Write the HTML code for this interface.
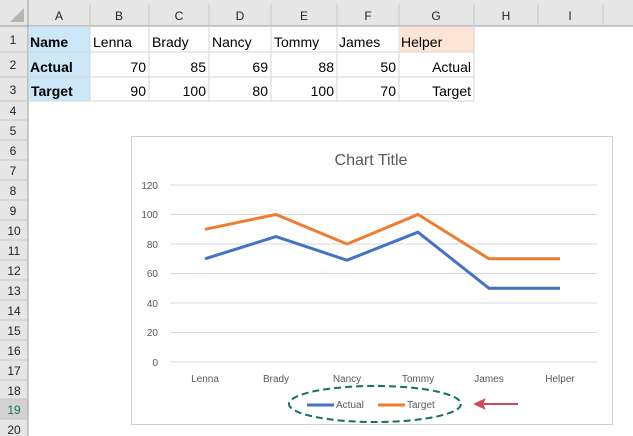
<!DOCTYPE html><html><head><style>
body{margin:0;width:633px;height:436px;overflow:hidden;background:#fff;font-family:"Liberation Sans",Arial,sans-serif;position:relative}
.a{position:absolute}
</style></head><body>
<svg class="a" style="left:0;top:0" width="633" height="436">
<rect x="0" y="0" width="633" height="26" fill="#e6e6e6"/>
<rect x="0" y="0" width="28" height="436" fill="#e6e6e6"/>
<rect x="0" y="399" width="28" height="20" fill="#d2d2d2"/>
<line x1="0" y1="26" x2="633" y2="26" stroke="#9b9b9b"/>
<line x1="28" y1="0" x2="28" y2="436" stroke="#9b9b9b"/>
<polygon points="24,8 24,22 10,22" fill="#b5b5b5"/>
<g stroke="#c8c8c8">
<line x1="90" y1="4" x2="90" y2="26"/><line x1="149" y1="4" x2="149" y2="26"/><line x1="209" y1="4" x2="209" y2="26"/><line x1="271" y1="4" x2="271" y2="26"/><line x1="337" y1="4" x2="337" y2="26"/><line x1="399" y1="4" x2="399" y2="26"/><line x1="474" y1="4" x2="474" y2="26"/><line x1="538" y1="4" x2="538" y2="26"/><line x1="603" y1="4" x2="603" y2="26"/>
</g>
<rect x="29" y="27" width="61" height="74" fill="#cce8f8"/>
<rect x="400" y="27" width="74" height="25" fill="#fce4d6"/>
<g stroke="#d4d4d4">
<line x1="28" y1="52" x2="474" y2="52"/><line x1="28" y1="77" x2="474" y2="77"/><line x1="28" y1="101" x2="474" y2="101"/>
<line x1="90" y1="26" x2="90" y2="101"/><line x1="149" y1="26" x2="149" y2="101"/><line x1="209" y1="26" x2="209" y2="101"/><line x1="271" y1="26" x2="271" y2="101"/><line x1="337" y1="26" x2="337" y2="101"/><line x1="399" y1="26" x2="399" y2="101"/><line x1="474" y1="26" x2="474" y2="101"/>
</g>
<g stroke="#c8c8c8"><line x1="0" y1="52" x2="28" y2="52"/><line x1="0" y1="77" x2="28" y2="77"/><line x1="0" y1="101" x2="28" y2="101"/>
<line x1="0" y1="120" x2="28" y2="120"/><line x1="0" y1="140" x2="28" y2="140"/><line x1="0" y1="160" x2="28" y2="160"/><line x1="0" y1="180" x2="28" y2="180"/><line x1="0" y1="200" x2="28" y2="200"/><line x1="0" y1="220" x2="28" y2="220"/><line x1="0" y1="240" x2="28" y2="240"/><line x1="0" y1="260" x2="28" y2="260"/><line x1="0" y1="280" x2="28" y2="280"/><line x1="0" y1="300" x2="28" y2="300"/><line x1="0" y1="320" x2="28" y2="320"/><line x1="0" y1="340" x2="28" y2="340"/><line x1="0" y1="360" x2="28" y2="360"/><line x1="0" y1="380" x2="28" y2="380"/><line x1="0" y1="399" x2="28" y2="399"/><line x1="0" y1="419" x2="28" y2="419"/></g>
<g font-size="12" fill="#222" text-anchor="middle">
<text x="59" y="20">A</text><text x="119" y="20">B</text><text x="179" y="20">C</text><text x="240" y="20">D</text><text x="304" y="20">E</text><text x="368" y="20">F</text><text x="436" y="20">G</text><text x="506" y="20">H</text><text x="570" y="20">I</text>
<text x="13" y="44">1</text><text x="13" y="69">2</text><text x="13" y="94">3</text>
<text x="13" y="115">4</text><text x="13" y="135">5</text><text x="13" y="155">6</text><text x="13" y="175">7</text><text x="13" y="195">8</text><text x="13" y="215">9</text><text x="14" y="235">10</text><text x="14" y="255">11</text><text x="14" y="275">12</text><text x="14" y="295">13</text><text x="14" y="315">14</text><text x="14" y="335">15</text><text x="14" y="355">16</text><text x="14" y="375">17</text><text x="14" y="395">18</text><text x="14" y="414" fill="#217346">19</text><text x="14" y="434">20</text>
</g>
<g font-size="14" fill="#000">
<text x="30" y="47" font-weight="bold">Name</text><text x="30" y="72" font-weight="bold">Actual</text><text x="31" y="96" font-weight="bold">Target</text>
<text x="93" y="47">Lenna</text><text x="152" y="47">Brady</text><text x="212" y="47">Nancy</text><text x="274" y="47">Tommy</text><text x="339" y="47">James</text><text x="401" y="47">Helper</text>
</g>
<g font-size="14" fill="#000" text-anchor="end">
<text x="146" y="72">70</text><text x="206" y="72">85</text><text x="268" y="72">69</text><text x="334" y="72">88</text><text x="396" y="72">50</text><text x="471" y="72">Actual</text>
<text x="146" y="96">90</text><text x="206" y="96">100</text><text x="268" y="96">80</text><text x="334" y="96">100</text><text x="396" y="96">70</text><text x="471" y="96">Target</text>
</g>
<rect x="131.5" y="136.5" width="481" height="288" fill="#fff" stroke="#d0d0d0"/>
<text x="371" y="165" font-size="16" fill="#595959" text-anchor="middle">Chart Title</text>
<g stroke="#d9d9d9"><line x1="170" y1="185" x2="597" y2="185"/><line x1="170" y1="214.5" x2="597" y2="214.5"/><line x1="170" y1="244" x2="597" y2="244"/><line x1="170" y1="273.5" x2="597" y2="273.5"/><line x1="170" y1="303" x2="597" y2="303"/><line x1="170" y1="332.5" x2="597" y2="332.5"/><line x1="170" y1="362" x2="597" y2="362"/></g>
<g font-size="10" fill="#595959" text-anchor="end">
<text x="158" y="189">120</text><text x="158" y="218">100</text><text x="158" y="248">80</text><text x="158" y="277">60</text><text x="158" y="307">40</text><text x="158" y="336">20</text><text x="158" y="366">0</text></g>
<g font-size="10" fill="#595959" text-anchor="middle">
<text x="205" y="382">Lenna</text><text x="276" y="382">Brady</text><text x="347" y="382">Nancy</text><text x="418" y="382">Tommy</text><text x="489" y="382">James</text><text x="560" y="382">Helper</text></g>
<polyline points="205,258.8 276,236.6 347,260.2 418,232.2 489,288.3 560,288.3" fill="none" stroke="#4472c4" stroke-width="3" stroke-linejoin="round"/>
<polyline points="205,229.3 276,214.5 347,244 418,214.5 489,258.8 560,258.8" fill="none" stroke="#ed7d31" stroke-width="3" stroke-linejoin="round"/>
<line x1="307" y1="405" x2="334" y2="405" stroke="#4472c4" stroke-width="3"/>
<text x="336" y="408" font-size="10" fill="#595959">Actual</text>
<line x1="378" y1="405" x2="405" y2="405" stroke="#ed7d31" stroke-width="3"/>
<text x="407" y="408" font-size="10" fill="#595959">Target</text>
<ellipse cx="375" cy="404" rx="86" ry="18" fill="none" stroke="#137161" stroke-width="2" stroke-dasharray="7,4"/>
<line x1="480" y1="404" x2="518" y2="404" stroke="#d04a5a" stroke-width="2"/>
<polygon points="473,404 486,398 483,404 486,410" fill="#d04a5a"/>
</svg>
</body></html>
